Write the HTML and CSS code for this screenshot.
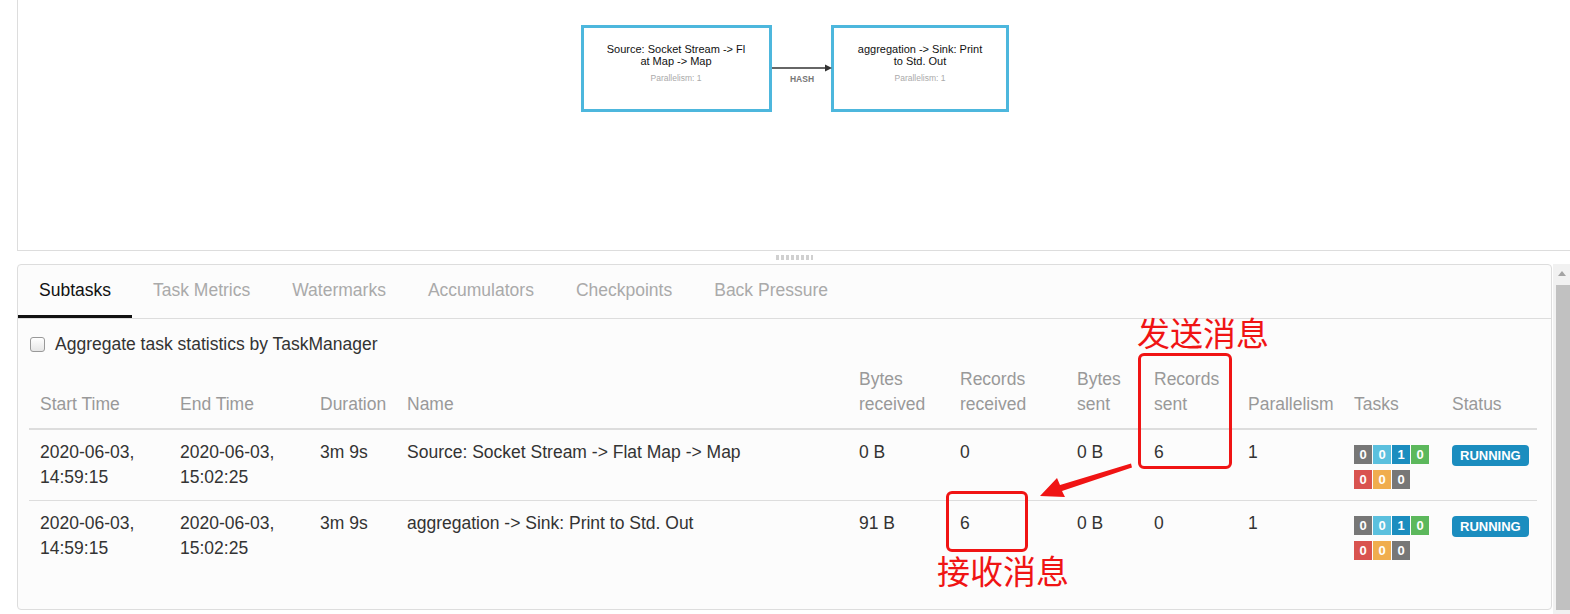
FILE: index.html
```html
<!DOCTYPE html>
<html lang="en">
<head>
    <meta charset="UTF-8">
    <title>Job Vertex Detail</title>
    <link rel="stylesheet" href="styles.css">
</head>

<body>
    <div class="graph-panel">
        <svg class="graph" width="1553" height="250" viewBox="17 0 1553 250">
            <rect x="581.5" y="26.5" width="188" height="84" class="node"/>
            <text x="675" y="53" class="node-name">Source: Socket Stream -&gt; Fl</text>
            <text x="675" y="65" class="node-name">at Map -&gt; Map</text>
            <text x="675" y="81" class="node-par">Parallelism: 1</text>

            <rect x="831.5" y="26.5" width="175" height="84" class="node"/>
            <text x="919" y="53" class="node-name">aggregation -&gt; Sink: Print</text>
            <text x="919" y="65" class="node-name">to Std. Out</text>
            <text x="919" y="81" class="node-par">Parallelism: 1</text>

            <line x1="771" y1="68" x2="825" y2="68" class="edge"/>
            <polygon points="824,64.5 831,68 824,71.5" class="edge-head"/>
            <text x="801" y="82" class="edge-label">HASH</text>
        </svg>
    </div>

    <div class="splitter"><span class="grip"></span></div>

    <div class="lower">
        <div class="detail-panel">
            <ul class="tabs">
                <li class="tab active">Subtasks</li>
                <li class="tab">Task Metrics</li>
                <li class="tab">Watermarks</li>
                <li class="tab">Accumulators</li>
                <li class="tab">Checkpoints</li>
                <li class="tab">Back Pressure</li>
            </ul>

            <label class="aggregate">
                <span class="checkbox"></span>
                Aggregate task statistics by TaskManager
            </label>

            <table class="subtasks">
                <colgroup>
                    <col style="width: 140px">
                    <col style="width: 140px">
                    <col style="width: 87px">
                    <col style="width: 452px">
                    <col style="width: 101px">
                    <col style="width: 117px">
                    <col style="width: 77px">
                    <col style="width: 94px">
                    <col style="width: 106px">
                    <col style="width: 98px">
                    <col style="width: 96px">
                </colgroup>
                <thead>
                    <tr>
                        <th>Start Time</th>
                        <th>End Time</th>
                        <th>Duration</th>
                        <th>Name</th>
                        <th>Bytes received</th>
                        <th>Records received</th>
                        <th>Bytes sent</th>
                        <th>Records sent</th>
                        <th>Parallelism</th>
                        <th>Tasks</th>
                        <th>Status</th>
                    </tr>
                </thead>
                <tbody>
                    <tr>
                        <td>2020-06-03, 14:59:15</td>
                        <td>2020-06-03, 15:02:25</td>
                        <td>3m 9s</td>
                        <td>Source: Socket Stream -&gt; Flat Map -&gt; Map</td>
                        <td>0 B</td>
                        <td>0</td>
                        <td>0 B</td>
                        <td>6</td>
                        <td>1</td>
                        <td>
                            <div class="badges">
                                <span class="badge created">0</span><span class="badge scheduled">0</span><span class="badge running">1</span><span class="badge finished">0</span>
                            </div>
                            <div class="badges">
                                <span class="badge failed">0</span><span class="badge canceling">0</span><span class="badge canceled">0</span>
                            </div>
                        </td>
                        <td><span class="status">RUNNING</span></td>
                    </tr>
                    <tr>
                        <td>2020-06-03, 14:59:15</td>
                        <td>2020-06-03, 15:02:25</td>
                        <td>3m 9s</td>
                        <td>aggregation -&gt; Sink: Print to Std. Out</td>
                        <td>91 B</td>
                        <td>6</td>
                        <td>0 B</td>
                        <td>0</td>
                        <td>1</td>
                        <td>
                            <div class="badges">
                                <span class="badge created">0</span><span class="badge scheduled">0</span><span class="badge running">1</span><span class="badge finished">0</span>
                            </div>
                            <div class="badges">
                                <span class="badge failed">0</span><span class="badge canceling">0</span><span class="badge canceled">0</span>
                            </div>
                        </td>
                        <td><span class="status">RUNNING</span></td>
                    </tr>
                </tbody>
            </table>
        </div>

        <div class="scrollbar">
            <span class="scroll-up"></span>
            <span class="scroll-thumb"></span>
        </div>
    </div>

    <!-- hand drawn notes on top of the screenshot -->
    <div class="note note-sent-text">发送消息</div>
    <div class="note-box note-sent-box"></div>
    <div class="note-box note-recv-box"></div>
    <div class="note note-recv-text">接收消息</div>
    <svg class="note-arrow" width="100" height="40" viewBox="1035 460 100 40">
        <polygon points="1131,463.5 1132,467.5 1062,491 1065,497 1040,496 1057,478 1060,485" fill="#f01414"/>
    </svg>
</body>

</html>
```

FILE: styles.css
```css
body {
    margin: 0;
    padding: 0;
    font-family: "Liberation Sans", Arial, sans-serif;
    font-size: 17.5px;
    color: #333;
    background-color: #fff;
    position: relative;
    overflow: hidden;
    height: 614px;
}

/* graph */

.graph-panel {
    margin-left: 17px;
    height: 250px;
    border-left: 1px solid #ddd;
    border-bottom: 1px solid #ddd;
    background-color: #fff;
}

.graph {
    display: block;
}

.node {
    fill: #fff;
    stroke: #4db7dd;
    stroke-width: 3;
}

.node-name {
    font-family: "Liberation Sans", Arial, sans-serif;
    font-size: 11px;
    text-anchor: middle;
    fill: #111;
}

.node-par {
    font-family: "Liberation Sans", Arial, sans-serif;
    font-size: 8.5px;
    text-anchor: middle;
    fill: #aaa;
}

.edge {
    stroke: #333;
    stroke-width: 1.4;
}

.edge-head {
    fill: #333;
}

.edge-label {
    font-family: "Liberation Sans", Arial, sans-serif;
    font-size: 8.5px;
    font-weight: bold;
    text-anchor: middle;
    fill: #777;
}

/* splitter */

.splitter {
    height: 13px;
    display: flex;
    align-items: center;
    justify-content: center;
}

.grip {
    width: 37px;
    height: 5px;
    margin-left: 18px;
    background: repeating-linear-gradient(90deg, #d0d0d0 0 3px, transparent 3px 5px);
}

/* lower panel */

.lower {
    display: flex;
    align-items: flex-start;
}

.detail-panel {
    margin-left: 17px;
    width: 1534px;
    height: 344px;
    border: 1px solid #ddd;
    border-radius: 4px;
    background-color: #fcfcfc;
}

.tabs {
    list-style: none;
    margin: 0;
    padding: 0;
    display: flex;
    height: 53px;
    border-bottom: 1px solid #ddd;
}

.tab {
    padding: 0 21px;
    line-height: 51px;
    color: #aaa;
    border-bottom: 3px solid transparent;
}

.tab.active {
    color: #111;
    border-bottom-color: #111;
}

.aggregate {
    display: flex;
    align-items: center;
    gap: 10px;
    margin: 13px 0 0 12px;
    line-height: 25px;
    color: #333;
}

.checkbox {
    width: 13px;
    height: 13px;
    border: 1px solid #999;
    border-radius: 3px;
    background: linear-gradient(#fff, #e6e6e6);
}

.subtasks {
    margin-left: 11px;
    width: 1508px;
    table-layout: fixed;
    border-collapse: collapse;
}

.subtasks th {
    text-align: left;
    font-weight: normal;
    color: #999;
    vertical-align: bottom;
    line-height: 25px;
    padding: 10px 11px 11px;
    border-bottom: 2px solid #ddd;
}

.subtasks td {
    vertical-align: top;
    line-height: 25px;
    padding: 10px 11px;
    border-top: 1px solid #ddd;
    color: #333;
}

.subtasks tbody tr:first-child td {
    border-top: none;
}

.badges {
    display: flex;
    gap: 1px;
    margin-top: 5px;
}

.badges + .badges {
    margin-top: 6px;
}

.badge {
    width: 18px;
    height: 19px;
    line-height: 19px;
    text-align: center;
    color: #fff;
    font-size: 13px;
    font-weight: bold;
}

.created, .canceled {
    background-color: #777;
}

.scheduled {
    background-color: #5bc0de;
}

.running {
    background-color: #1b8dbf;
}

.finished {
    background-color: #5cb85c;
}

.failed {
    background-color: #d9534f;
}

.canceling {
    background-color: #f0ad4e;
}

.status {
    display: inline-block;
    margin-top: 5px;
    padding: 0 8px;
    height: 21px;
    line-height: 21px;
    border-radius: 4px;
    background-color: #1b8dbf;
    color: #fff;
    font-size: 13px;
    font-weight: bold;
    vertical-align: top;
}

/* fake scrollbar */

.scrollbar {
    margin-left: 1px;
    width: 17px;
    height: 350px;
    background-color: #f1f1f1;
    display: flex;
    flex-direction: column;
    align-items: center;
}

.scroll-up {
    margin-top: 7px;
    width: 0;
    height: 0;
    border-left: 4px solid transparent;
    border-right: 4px solid transparent;
    border-bottom: 5px solid #a3a3a3;
}

.scroll-thumb {
    margin-top: 9px;
    width: 14px;
    margin-left: 3px;
    height: 325px;
    background-color: #c1c1c1;
}

/* red annotations */

.note {
    position: absolute;
    font-family: "Noto Sans CJK SC", sans-serif;
    font-size: 33px;
    line-height: 1;
    color: #f01414;
}

.note-sent-text {
    left: 1137px;
    top: 316px;
}

.note-recv-text {
    left: 937px;
    top: 554px;
}

.note-box {
    position: absolute;
    border: 3px solid #f01414;
    border-radius: 6px;
}

.note-sent-box {
    left: 1138px;
    top: 353px;
    width: 88px;
    height: 110px;
}

.note-recv-box {
    left: 946px;
    top: 491px;
    width: 76px;
    height: 55px;
}

.note-arrow {
    position: absolute;
    left: 1035px;
    top: 460px;
}
```
